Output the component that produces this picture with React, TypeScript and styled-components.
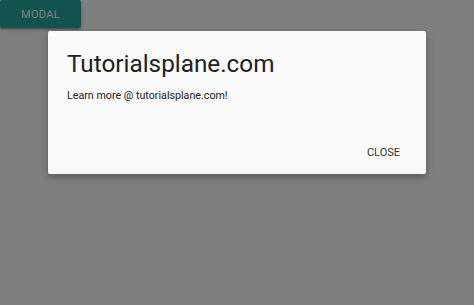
import styled, { createGlobalStyle } from 'styled-components'

const Global = createGlobalStyle`
    html, body {
        margin: 0;
        padding: 0;
        background: #ffffff;
        font-family: Roboto, "Liberation Sans", sans-serif;
    }
`;

const Page = styled.div`
    width: 474px;
    height: 305px;
    position: relative;
    overflow: hidden;
`;

const TriggerButton = styled.button`
    height: 28px;
    width: 81px;
    border: none;
    border-radius: 2px;
    background: #26a69a;
    color: #ffffff;
    font-family: Roboto, "Liberation Sans", sans-serif;
    font-size: 11px;
    letter-spacing: 0.3px;
    text-transform: uppercase;
    box-shadow: 0 2px 2px 0 rgba(0,0,0,0.14), 0 3px 1px -2px rgba(0,0,0,0.12), 0 1px 5px 0 rgba(0,0,0,0.2);
`;

const Overlay = styled.div`
    position: absolute;
    inset: 0;
    background: rgba(0, 0, 0, 0.5);
`;

const Modal = styled.div`
    position: absolute;
    top: 31px;
    left: 48px;
    width: 378px;
    height: 143px;
    background: #fafafa;
    border-radius: 2px;
    box-shadow: 0 4px 6px 0 rgba(0,0,0,0.18), 0 2px 10px 1px rgba(0,0,0,0.1);
    display: flex;
    flex-direction: column;
`;

const Content = styled.div`
    flex: 1;
    padding: 18px 19px 0;
`;

const Title = styled.h4`
    margin: 0 0 10px;
    font-size: 24.3px;
    font-weight: 400;
    line-height: 30px;
    color: #212121;
`;

const Text = styled.p`
    margin: 0;
    font-size: 10.7px;
    line-height: 14px;
    color: #212121;
`;

const Footer = styled.div`
    height: 44px;
    display: flex;
    justify-content: flex-end;
    align-items: center;
    padding: 0 20px;
`;

const FlatButton = styled.button`
    border: none;
    background: transparent;
    padding: 4px 6px;
    font-family: Roboto, "Liberation Sans", sans-serif;
    font-size: 11px;
    text-transform: uppercase;
    color: #343434;
`;

const App = () => {
    return (
        <Page>
            <Global />
            <TriggerButton>Modal</TriggerButton>
            <Overlay />
            <Modal>
                <Content>
                    <Title>Tutorialsplane.com</Title>
                    <Text>Learn more @ tutorialsplane.com!</Text>
                </Content>
                <Footer>
                    <FlatButton>Close</FlatButton>
                </Footer>
            </Modal>
        </Page>
    );
};

export default App;
